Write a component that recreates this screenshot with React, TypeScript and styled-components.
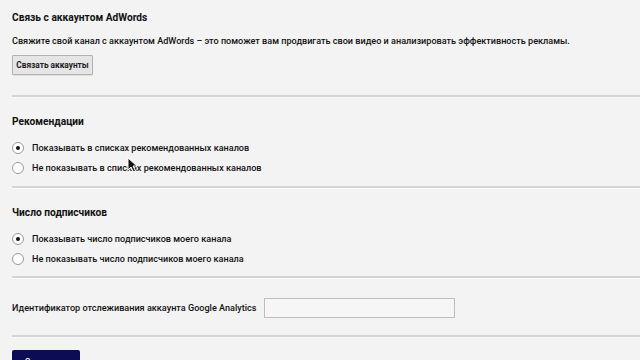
import styled, { createGlobalStyle } from 'styled-components';

let Global = createGlobalStyle`
  html, body {
    margin: 0;
    padding: 0;
    background: #f3f3f3;
    overflow: hidden;
  }
  body {
    font-family: Roboto, "Liberation Sans", Arial, sans-serif;
    color: #111;
  }
`;

let Page = styled.div`
  position: relative;
  width: 640px;
  height: 360px;
  padding-left: 12px;
  box-sizing: border-box;
  overflow: hidden;
`;

let Section = styled.section<{ $top: number; $bottom: number }>`
  padding-top: ${(p) => p.$top}px;
  padding-bottom: ${(p) => p.$bottom}px;
  border-bottom: 2px solid #d4d4d4;
  box-shadow: 0 1px 0 #fbfbfb;
`;

let Title = styled.h2`
  margin: 0;
  font-size: 10.2px;
  line-height: 14px;
  font-weight: 700;
`;

let Description = styled.p`
  margin: 9px 0 7px;
  font-size: 9.1px;
  line-height: 14px;
  font-weight: 500;
`;

let GrayButton = styled.button`
  display: block;
  height: 20px;
  width: 81px;
  padding: 0;
  border: 1px solid #b3b3b3;
  border-radius: 1px;
  background: #e5e5e5;
  box-shadow: 0 1px 1px rgba(0, 0, 0, 0.08);
  font-family: inherit;
  font-size: 8.3px;
  font-weight: 700;
  color: #222;
`;

let Options = styled.div`
  margin-top: 9px;
  display: flex;
  flex-direction: column;
`;

let Option = styled.label`
  display: flex;
  align-items: center;
  gap: 8px;
  height: 20px;
  font-size: 9.1px;
  font-weight: 500;
`;

let Radio = styled.span<{ $checked?: boolean }>`
  position: relative;
  width: 10px;
  height: 10px;
  border-radius: 50%;
  border: 1px solid #9a9a9a;
  background: #fff;
  flex-shrink: 0;

  &::after {
    content: '';
    display: ${(p) => (p.$checked ? 'block' : 'none')};
    position: absolute;
    left: 3px;
    top: 3px;
    width: 4px;
    height: 4px;
    border-radius: 50%;
    background: #111;
  }
`;

let FieldRow = styled.div`
  display: flex;
  align-items: center;
  gap: 7px;
  height: 20px;
  font-size: 9.1px;
  font-weight: 500;
`;

let TextInput = styled.input`
  box-sizing: border-box;
  width: 191px;
  height: 20px;
  border: 1px solid #bcbcbc;
  background: #f6f6f6;
  padding: 0 4px;
`;

let SaveButton = styled.button`
  display: block;
  margin-top: 13px;
  width: 68px;
  height: 24px;
  border: none;
  border-radius: 2px;
  background: #0c0c55;
  color: #fff;
  font-family: inherit;
  font-size: 8.5px;
  line-height: 12px;
  font-weight: 500;
  padding: 6px 0 0;
  vertical-align: top;
  display: flex;
  justify-content: center;
  align-items: flex-start;
`;

let Cursor = styled.svg`
  position: absolute;
  left: 127px;
  top: 157px;
`;

let options = [
  {
    title: 'Рекомендации',
    items: ['Показывать в списках рекомендованных каналов', 'Не показывать в списках рекомендованных каналов'],
    top: 18,
    bottom: 8
  },
  {
    title: 'Число подписчиков',
    items: ['Показывать число подписчиков моего канала', 'Не показывать число подписчиков моего канала'],
    top: 18,
    bottom: 7
  }
];

export default function App() {
  return (
    <>
      <Global />
      <Page>
        <Section $top={11} $bottom={20}>
          <Title>Связь с аккаунтом AdWords</Title>
          <Description>
            Свяжите свой канал с аккаунтом AdWords – это поможет вам продвигать свои видео и анализировать
            эффективность рекламы.
          </Description>
          <GrayButton>Связать аккаунты</GrayButton>
        </Section>

        {options.map((group) => (
          <Section key={group.title} $top={group.top} $bottom={group.bottom}>
            <Title>{group.title}</Title>
            <Options>
              {group.items.map((item, i) => (
                <Option key={item}>
                  <Radio $checked={i === 0} />
                  {item}
                </Option>
              ))}
            </Options>
          </Section>
        ))}

        <Section $top={20} $bottom={17}>
          <FieldRow>
            Идентификатор отслеживания аккаунта Google Analytics
            <TextInput />
          </FieldRow>
        </Section>

        <SaveButton>Сохранить</SaveButton>

        <Cursor width="11" height="16" viewBox="0 0 11 16">
          <path d="M1 1 L1 13 L4 10 L6.5 15 L8.5 14 L6 9 L10 9 Z" fill="#111" stroke="#fff" strokeWidth="1" />
        </Cursor>
      </Page>
    </>
  );
}
